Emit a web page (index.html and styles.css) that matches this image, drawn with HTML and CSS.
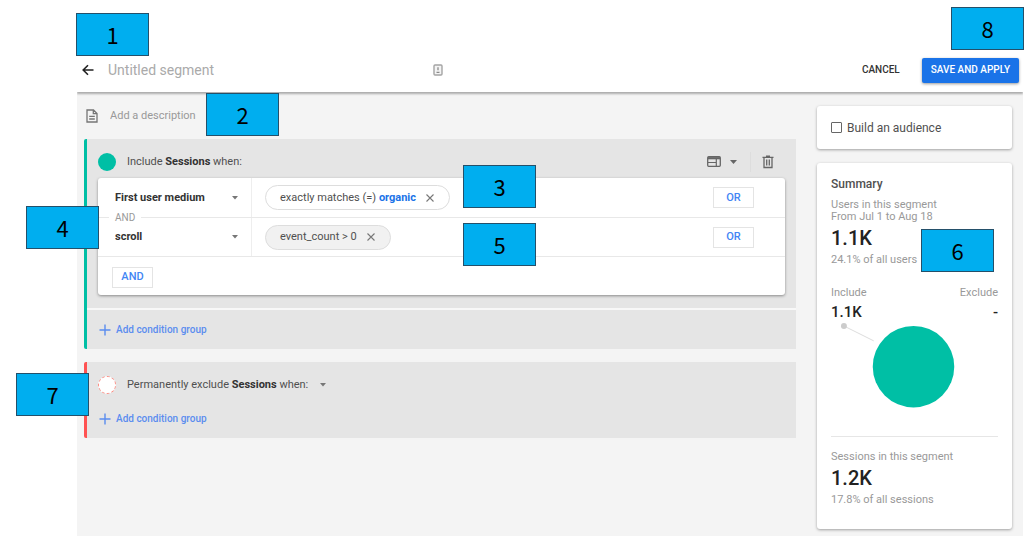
FILE: index.html
```html
<!DOCTYPE html>
<html lang="en">
<head>
<meta charset="utf-8">
<title>Segment builder</title>
<link rel="stylesheet" href="styles.css">
</head>
<body>
<div class="app">
  <header class="topbar">
    <button class="icon-btn" type="button" aria-label="Back">
      <svg width="12" height="12" viewBox="0 0 12 12" fill="none" stroke="#222" stroke-width="1.6"><path d="M11.5 6H1.3M6 1.2 1.2 6 6 10.8"/></svg>
    </button>
    <input class="title-input" type="text" aria-label="Segment name" placeholder="Untitled segment">
    <svg class="input-badge" width="10" height="12" viewBox="0 0 10 12"><rect x="1" y="1" width="8" height="10" rx="1" fill="#f4f4f4" stroke="#a4a4a4" stroke-width="1.4"/><path d="M5 3.2v3M3.5 8.3h3" stroke="#8a8a8a" stroke-width="1.3"/></svg>
    <div class="topbar-actions">
      <button class="btn-cancel" type="button">CANCEL</button>
      <button class="btn-save" type="button">SAVE AND APPLY</button>
    </div>
  </header>
  <div class="body">
    <main class="builder">
      <div class="description">
        <svg width="12" height="14" viewBox="0 0 12 14" fill="none" stroke="#757575" stroke-width="1.3"><path d="M1 1h6.5L11 4.5V13H1zM7.3 1v3.7H11M3.2 7.3h5.6M3.2 10h5.6"/></svg>
        <input class="description-input" type="text" aria-label="Description" placeholder="Add a description">
      </div>

      <section class="group include">
        <div class="group-head">
          <span class="dot"></span>
          <span class="group-title">Include <b>Sessions</b> when:</span>
          <div class="group-tools">
            <button class="icon-btn scope" type="button" aria-label="Condition scope">
              <svg width="14" height="11" viewBox="0 0 14 11"><rect x=".7" y=".7" width="12.6" height="9.6" rx="1" fill="none" stroke="#666" stroke-width="1.3"/><path d="M1 2.2h12" stroke="#666" stroke-width="2.2"/><path d="M1 6.5h8M9.3 3v7" stroke="#666" stroke-width="1.2"/></svg>
              <svg width="7" height="4" viewBox="0 0 7 4"><path d="M0 0h7L3.500 4z" fill="#666"/></svg>
            </button>
            <button class="icon-btn trash" type="button" aria-label="Delete group">
              <svg width="12" height="14" viewBox="0 0 12 14" fill="none" stroke="#666" stroke-width="1.3"><path d="M.5 2.300h11M4 1.200h4M2 2.500v10h8v-10M4.700 4.600v5.800M7.300 4.600v5.800"/></svg>
            </button>
          </div>
        </div>
        <div class="conditions">
          <div class="condition first">
            <div class="field">
              <select aria-label="First condition"><option>First user medium</option></select>
              <svg width="6" height="4" viewBox="0 0 6 4"><path d="M0 0h6L3 3.500z" fill="#777"/></svg>
            </div>
            <div class="filter">
              <span class="chip">exactly matches (=)&nbsp;<b>organic</b>
                <button class="icon-btn" type="button" aria-label="Remove filter"><svg width="8" height="8" viewBox="0 0 8 8" stroke="#777" stroke-width="1.1"><path d="M.5.5l7 7M7.500.5l-7 7"/></svg></button></span>
              <button class="btn-logic" type="button">OR</button>
            </div>
          </div>
          <div class="condition">
            <span class="joiner">AND</span>
            <div class="field">
              <select aria-label="Second condition"><option>scroll</option></select>
              <svg width="6" height="4" viewBox="0 0 6 4"><path d="M0 0h6L3 3.500z" fill="#777"/></svg>
            </div>
            <div class="filter">
              <span class="chip filled">event_count &gt; 0
                <button class="icon-btn" type="button" aria-label="Remove filter"><svg width="8" height="8" viewBox="0 0 8 8" stroke="#777" stroke-width="1.1"><path d="M.5.5l7 7M7.500.5l-7 7"/></svg></button></span>
              <button class="btn-logic" type="button">OR</button>
            </div>
          </div>
          <div class="condition last">
            <button class="btn-logic" type="button">AND</button>
          </div>
        </div>
        <div class="group-foot">
          <button class="add-group" type="button"><svg width="12" height="12" viewBox="0 0 12 12" stroke="#5b8def" stroke-width="1.4"><path d="M6 .5v11M.5 6h11"/></svg>Add condition group</button>
        </div>
      </section>

      <section class="group exclude">
        <div class="group-head">
          <span class="dot"></span>
          <button class="group-title" type="button">Permanently exclude <b>Sessions</b> when:<svg width="6" height="4" viewBox="0 0 6 4"><path d="M0 0h6L3 3.500z" fill="#777"/></svg></button>
        </div>
        <div class="group-foot">
          <button class="add-group" type="button"><svg width="12" height="12" viewBox="0 0 12 12" stroke="#5b8def" stroke-width="1.4"><path d="M6 .5v11M.5 6h11"/></svg>Add condition group</button>
        </div>
      </section>
    </main>

    <aside class="side">
      <label class="card audience"><input type="checkbox">Build an audience</label>
      <section class="card summary">
        <h2>Summary</h2>
        <p class="muted">Users in this segment<br>From Jul 1 to Aug 18</p>
        <p class="big">1.1K</p>
        <p class="muted">24.1% of all users</p>
        <div class="split">
          <div><p class="muted">Include</p><p class="mid">1.1K</p></div>
          <div class="right"><p class="muted">Exclude</p><p class="mid">-</p></div>
        </div>
        <svg class="pie" viewBox="0 0 168 92"><path d="M13 5 43 20" stroke="#ddd" stroke-width="1"/><circle cx="13" cy="5" r="3" fill="#ccc"/><circle cx="83" cy="46" r="41" fill="#00bfa5"/></svg>
        <hr>
        <p class="muted">Sessions in this segment</p>
        <p class="big">1.2K</p>
        <p class="muted">17.8% of all sessions</p>
      </section>
    </aside>
  </div>
</div>

<span class="callout c1">1</span>
<span class="callout c2">2</span>
<span class="callout c3">3</span>
<span class="callout c4">4</span>
<span class="callout c5">5</span>
<span class="callout c6">6</span>
<span class="callout c7">7</span>
<span class="callout c8">8</span>
</body>
</html>
```
FILE: styles.css
```css
* { box-sizing: border-box; }
body {
  margin: 0;
  padding: 48px 7px 3px 77px;
  background: #fff;
  color: #505050;
  font: 11px/12px Roboto, sans-serif;
}
button, input, select { font: inherit; color: inherit; }
button { background: none; border: 0; padding: 0; cursor: pointer; }
p, h2 { margin: 0; }
b { font-weight: 700; }
svg { display: block; flex: none; }
.icon-btn { display: flex; align-items: center; }

.app { background: #f4f4f4; }
.topbar {
  position: relative;
  display: flex;
  align-items: center;
  height: 44px;
  padding: 0 4px 0 5px;
  background: #fff;
  box-shadow: 0 2px 2px rgba(0, 0, 0, .3);
  clip-path: inset(0 0 -6px 0);
}
.title-input {
  width: 320px;
  margin-left: 14px;
  padding: 0;
  border: 0;
  outline: 0;
  background: none;
  font-size: 14px;
  line-height: 20px;
}
.title-input::placeholder { color: #aaa; opacity: 1; }
.input-badge { margin-left: 5px; }
.topbar-actions {
  display: flex;
  align-items: center;
  gap: 22px;
  margin-left: auto;
  font-size: 10px;
  font-weight: 500;
}
.btn-cancel { color: #333; }
.btn-save {
  height: 25px;
  padding: 0 9px;
  border-radius: 2px;
  background: #1a73e8;
  color: #fff;
  box-shadow: 0 1px 3px rgba(0, 0, 0, .4);
}

.body { display: flex; gap: 21px; padding: 0 11px 7px 7px; }
.builder { flex: 1; min-width: 0; }
.description { display: flex; align-items: center; gap: 12px; height: 47px; padding: 0 2px; }
.description-input { flex: 1; padding: 0; border: 0; outline: 0; background: none; }
.description-input::placeholder { color: #999; opacity: 1; }

.group {
  margin-bottom: 13px;
  border-left: 3px solid #00bfa5;
  border-radius: 2px 0 0 2px;
  background: #e5e5e5;
}
.exclude { border-color: #ff5252; }
.group-head { display: flex; align-items: center; height: 39px; padding: 6px 11px 0; }
.exclude .group-head { height: 38px; padding-top: 8px; }
.dot { flex: none; width: 18px; height: 18px; border-radius: 50%; background: #00bfa5; }
.exclude .dot { border: 1px dashed #ff8a80; background: #fff; }
.group-title { display: flex; align-items: center; margin-left: 11px; white-space: pre; }
.group-title svg { margin-left: 12px; }
.group-title b { color: #333; }
.group-tools { display: flex; align-items: center; margin-left: auto; padding-right: 11px; }
.scope { gap: 9px; height: 20px; padding-right: 13px; border-right: 1px solid #ddd; }
.trash { margin-left: 11px; }

.conditions {
  margin: 0 11px 13px;
  border-radius: 3px;
  background: #fff;
  box-shadow: 0 1px 3px rgba(0, 0, 0, .4);
}
.condition { position: relative; display: flex; height: 39px; border-bottom: 1px solid #e8e8e8; }
.first { height: 40px; }
.last { align-items: center; height: 38px; padding: 2px 14px 0; border: 0; }
.joiner {
  position: absolute;
  top: -6px;
  left: 11px;
  padding: 0 6px;
  background: #fff;
  color: #999;
  font-size: 10px;
}
.field {
  display: flex;
  align-items: center;
  width: 154px;
  padding: 0 13px 0 17px;
  border-right: 1px solid #eee;
}
.field select {
  flex: 1;
  min-width: 0;
  padding: 0;
  border: 0;
  appearance: none;
  background: none;
  color: #333;
  font-weight: 700;
}
.filter {
  flex: 1;
  display: flex;
  align-items: center;
  justify-content: space-between;
  padding: 0 31px 0 13px;
}
.chip {
  display: flex;
  align-items: center;
  height: 25px;
  padding: 0 15px 0 14px;
  border: 1px solid #ddd;
  border-radius: 13px;
  white-space: nowrap;
}
.chip b { color: #1a73e8; }
.chip .icon-btn { margin-left: 10px; }
.filled { background: #f1f1f1; }
.btn-logic {
  width: 41px;
  height: 21px;
  border: 1px solid #e4e4e4;
  color: #4285f4;
  font-weight: 500;
}
.group-foot { display: flex; align-items: center; height: 38px; padding: 0 12px; }
.include .group-foot { height: 41px; border-top: 2px solid #f8f8f8; }
.add-group { display: flex; align-items: center; gap: 5px; color: #5b8def; font-size: 10px; font-weight: 500; }

.side { width: 195px; padding-top: 14px; }
.card { display: block; border-radius: 3px; background: #fff; box-shadow: 0 1px 3px rgba(0, 0, 0, .35); }
.audience { display: flex; align-items: center; gap: 5px; height: 43px; padding: 0 14px; font-size: 12px; }
.audience input {
  width: 11px;
  height: 11px;
  margin: 0;
  border: 1px solid #666;
  border-radius: 1px;
  appearance: none;
}
.audience input:checked { background: #1a73e8; }
.summary { margin-top: 14px; padding: 14px 14px 23px; }
.summary h2 { margin-bottom: 8px; font-size: 12px; line-height: 14px; font-weight: 500; }
.muted { color: #999; }
.big { margin: 4px 0 5px; color: #222; font-size: 20px; line-height: 22px; font-weight: 500; }
.split { display: flex; justify-content: space-between; margin-top: 21px; }
.right { text-align: right; }
.mid { margin-top: 4px; color: #222; font-size: 15px; line-height: 18px; font-weight: 500; }
.pie { width: 100%; margin-bottom: 24px; }
.summary hr { margin: 0 0 14px; border: 0; border-top: 1px solid #e6e6e6; }

/* Numbered callouts laid over the interface */
.callout {
  position: absolute;
  width: 73px;
  height: 43px;
  border: 1px solid #24506a;
  background: #00aeef;
  color: #000;
  font: 22px/40px "Noto Sans CJK SC", sans-serif;
  text-align: center;
}
.c1 { left: 76px; top: 13px; }
.c2 { left: 206px; top: 93px; }
.c3 { left: 463px; top: 165px; }
.c4 { left: 26px; top: 206px; }
.c5 { left: 463px; top: 223px; }
.c6 { left: 921px; top: 229px; }
.c7 { left: 16px; top: 373px; }
.c8 { left: 951px; top: 7px; }
```
